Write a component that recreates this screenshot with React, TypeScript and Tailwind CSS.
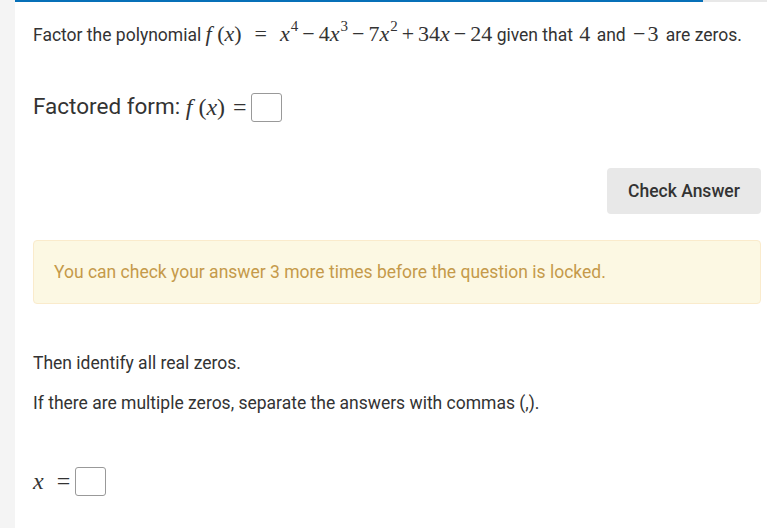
import React from "react";

const M = ({ children }: { children: React.ReactNode }) => (
  <span className="font-['Liberation_Serif',serif] text-[22px] leading-none">{children}</span>
);
const I = ({ children }: { children: React.ReactNode }) => <i className="italic">{children}</i>;
const Sup = ({ children }: { children: React.ReactNode }) => (
  <sup className="relative -top-[2px] ml-[1px] text-[15px] align-super leading-none">{children}</sup>
);
const Op = ({ children }: { children: React.ReactNode }) => (
  <span className="mx-[4px]">{children}</span>
);

export default function App() {
  return (
    <div className="flex min-h-[528px] w-[767px] bg-white font-['Roboto',sans-serif] text-[#333]">
      <div className="w-[15px] shrink-0 bg-[#f4f4f4]" />
      <div className="flex flex-1 flex-col">
        <div className="flex h-[2px]">
          <div className="w-[688px] bg-[#0770b8]" />
          <div className="flex-1 bg-[#e8e8e8]" />
        </div>
        <div className="flex flex-col pl-[18px] pr-[6px]">
          <p className="mt-[19px] whitespace-nowrap text-[17.5px] leading-[26px]">
            Factor the polynomial{" "}
            <M>
              <I>f</I>&nbsp;(<I>x</I>)<span className="mx-[13px]">=</span>
              <I>x</I>
              <Sup>4</Sup>
              <Op>−</Op>4<I>x</I>
              <Sup>3</Sup>
              <Op>−</Op>7<I>x</I>
              <Sup>2</Sup>
              <Op>+</Op>34<I>x</I>
              <Op>−</Op>24
            </M>{" "}
            given that{" "}
            <span className="mx-[2px]">
              <M>4</M>
            </span>{" "}
            and{" "}
            <span className="mx-[3px]">
              <M>
                <span className="mr-[2px]">−</span>3
              </M>
            </span>{" "}
            are zeros.
          </p>
          <div className="mt-[44px] flex h-[30px] items-center text-[22.5px]">
            <span>Factored form:&nbsp;</span>
            <span className="font-['Liberation_Serif',serif] text-[24px]">
              <i>f</i>&nbsp;(<i>x</i>)<span className="ml-[8px]">=</span>
            </span>
            <span className="ml-[4px] inline-block h-[29px] w-[31px] rounded-[3px] border border-[#999]" />
          </div>
          <div className="mt-[46px] flex justify-end">
            <button className="h-[46px] w-[154px] rounded-[4px] bg-[#e8e8e8] text-[17.5px] font-medium text-[#333]">
              Check Answer
            </button>
          </div>
          <div className="mt-[26px] flex h-[64px] items-center rounded-[4px] border border-[#faebcc] bg-[#fcf8e3] pl-[20px] text-[17.5px] text-[#c59a4a]">
            You can check your answer 3 more times before the question is locked.
          </div>
          <p className="mt-[46px] text-[17.5px] leading-[26px]">Then identify all real zeros.</p>
          <p className="mt-[14px] text-[17.5px] leading-[26px]">
            If there are multiple zeros, separate the answers with commas (,).
          </p>
          <div className="mt-[47px] flex items-center">
            <span className="font-['Liberation_Serif',serif] text-[24px]">
              <i>x</i>
              <span className="ml-[13px]">=</span>
            </span>
            <span className="ml-[5px] inline-block h-[29px] w-[31px] rounded-[3px] border border-[#999]" />
          </div>
        </div>
      </div>
    </div>
  );
}
